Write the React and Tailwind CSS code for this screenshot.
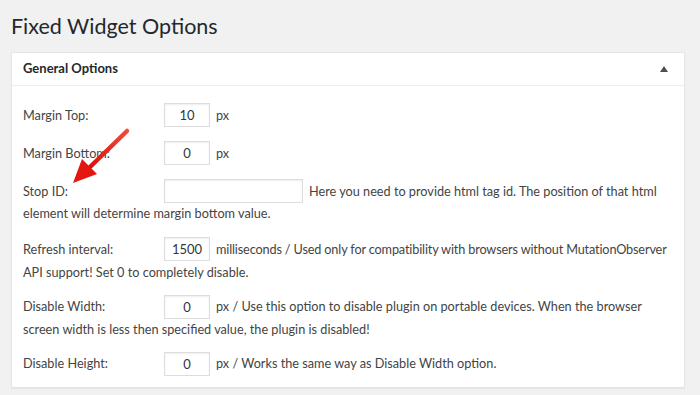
import React from "react";

const font = { fontFamily: 'Lato, "Open Sans", Arial, sans-serif' };

const Field = ({ label, value, wide, mb = "mb-[14px]", children }) => (
  <div className={"leading-[19px] text-[12.7px] text-[#444] whitespace-nowrap " + mb}>
    <span className="inline-block w-[141px] align-middle">{label}</span>
    <span
      className={
        "inline-block h-[24px] align-middle border border-[#ddd] bg-white text-center leading-[22px] text-[13px] text-[#32373c] shadow-[inset_0_1px_2px_rgba(0,0,0,0.07)] " +
        (wide ? "w-[139px]" : "w-[46px]")
      }
    >
      {value}
    </span>
    <span className="align-middle ml-[6px]">{children}</span>
  </div>
);

const RedArrow = () => (
  <svg
    className="absolute left-[70px] top-[125px]"
    width="62"
    height="62"
    viewBox="0 0 62 62"
  >
    <defs>
      <linearGradient id="ar" x1="1" y1="0" x2="0" y2="1">
        <stop offset="0" stopColor="#f04a3a" />
        <stop offset="1" stopColor="#d9120c" />
      </linearGradient>
    </defs>
    <line x1="57" y1="6" x2="20" y2="42" stroke="url(#ar)" strokeWidth="4.5" strokeLinecap="round" />
    <polygon points="3,58 12,34 27,49" fill="#e3170f" />
  </svg>
);

export default function App() {
  return (
    <div className="relative w-[700px] h-[395px] bg-[#f1f1f1] overflow-hidden" style={font}>
      <h1 className="pl-[11px] pt-[12px] text-[21.5px] leading-[29px] text-[#23282d] font-normal">
        Fixed Widget Options
      </h1>
      <div className="mt-[11px] ml-[11px] w-[674px] bg-white border border-[#e5e5e5] shadow-[0_1px_1px_rgba(0,0,0,0.04)]">
        <div className="flex items-center justify-between h-[33px] px-[11px] border-b border-[#eee]">
          <span className="text-[13px] font-bold text-[#23282d]">General Options</span>
          <svg width="10" height="8" viewBox="0 0 10 8" className="mr-[4px]">
            <polygon points="1,7 9,7 5,1" fill="#4b5058" />
          </svg>
        </div>
        <div className="pt-[17px] px-[11px]">
          <Field label="Margin Top:" value="10">px</Field>
          <Field label="Margin Bottom:" value="0">px</Field>
          <Field label="Stop ID:" value="" wide>
            Here you need to provide html tag id. The position of that html
            <br />
            element will determine margin bottom value.
          </Field>
          <Field label="Refresh interval:" value="1500" mb="mb-[13px]">
            <span className="tracking-[-0.15px]">
              milliseconds / Used only for compatibility with browsers without MutationObserver
            </span>
            <br />
            API support! Set 0 to completely disable.
          </Field>
          <Field label="Disable Width:" value="0" mb="mb-[13px]">
            px / Use this option to disable plugin on portable devices. When the browser
            <br />
            screen width is less then specified value, the plugin is disabled!
          </Field>
          <Field label="Disable Height:" value="0" mb="mb-[11px]">
            px / Works the same way as Disable Width option.
          </Field>
        </div>
      </div>
      <RedArrow />
    </div>
  );
}
